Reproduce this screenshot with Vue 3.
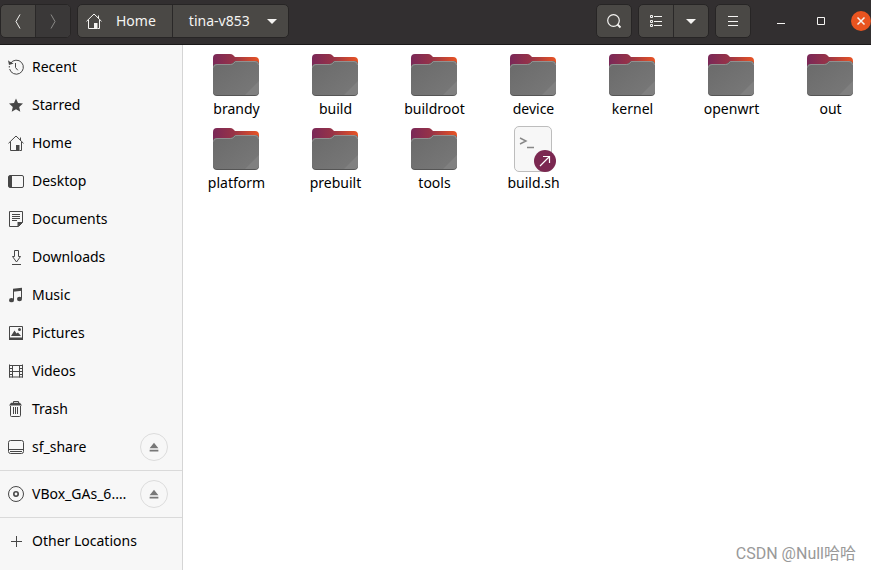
<script setup>
const places = [
  { name: 'Recent', icon: 'recent' },
  { name: 'Starred', icon: 'star' },
  { name: 'Home', icon: 'home' },
  { name: 'Desktop', icon: 'desktop' },
  { name: 'Documents', icon: 'documents' },
  { name: 'Downloads', icon: 'downloads' },
  { name: 'Music', icon: 'music' },
  { name: 'Pictures', icon: 'pictures' },
  { name: 'Videos', icon: 'videos' },
  { name: 'Trash', icon: 'trash' },
  { name: 'sf_share', icon: 'drive', eject: true },
]
const volumes = [{ name: 'VBox_GAs_6.…', icon: 'disc', eject: true }]
const other = [{ name: 'Other Locations', icon: 'plus' }]
const sections = [places, volumes, other]

const files = [
  'brandy', 'build', 'buildroot', 'device', 'kernel', 'openwrt', 'out',
  'platform', 'prebuilt', 'tools', 'build.sh',
]

const line = (d) => `<path d="${d}" fill="none" stroke="currentColor"/>`
const solid = (d) => `<path d="${d}" fill="currentColor" fill-rule="evenodd"/>`

const icons = {
  recent:
    line('M2.6 4.2A7 7 0 1 1 1.6 10M7.5 4v4.5l2.3 2.8') +
    solid('M0 1.2l1.6 1.2L5.6 4.4 1 6zM.8 7h1v1.6h-1z'),
  star: solid('M8 1.5l2 4.6 5 .5-3.8 3.3 1.1 4.9L8 12.2l-4.3 2.6 1.1-4.9L1 6.6l5-.5z'),
  home:
    line('M.5 8.3L8 1l7.5 7.3M2.5 7v8.5h6M11.5 15.5h2V7M12.5 2.5v3') +
    solid('M8 10h3.5v6H8z'),
  desktop:
    '<rect x=".5" y="2.5" width="15" height="12" rx="1.5" fill="none" stroke="currentColor"/>' +
    solid('M1 3h3v11H1z'),
  documents:
    line('M1.5 .5h13v11l-4 4h-9zM4 3.5h8M4 5.5h8M4 7.5h8M4 9.5h5') +
    solid('M9.5 16v-5H15z'),
  downloads: line('M6.5 1.5h4v6h2l-4 5.5-4-5.5h2zM4 15.5h9'),
  music:
    line('M5.5 13V2.5M13.5 11.5V1.5') +
    solid('M5 1.8L14 .8v3L5 4.8zM1 13.2a2.3 2 0 1 0 5 0 2.3 2 0 0 0-5 0zM9 12a2.3 2 0 1 0 5 0 2.3 2 0 0 0-5 0z'),
  pictures:
    line('M1.5 1.5h13v13h-13z') +
    solid('M1 12.5h14V15H1zM3 11l3.5-5.5 2 3L10 7.5l3 3.5zM10 4.5a1.5 1.5 0 1 0 3 0 1.5 1.5 0 0 0-3 0z'),
  videos:
    line('M1.5 1.5v13M14.5 1.5v13M4.5 2v12.5M11.5 2v12.5M4 2.5h8M4 8.5h8M4 14h8') +
    line('M1 2.5h3M1 5.5h3M1 8.5h3M1 11.5h3M1 14h3M12 2.5h3M12 5.5h3M12 8.5h3M12 11.5h3M12 14h3'),
  trash:
    line('M5.5 2v-1.5h5V2M2.5 5v9.5q0 1 1 1h8q1 0 1-1V5M5.5 6v7M7.5 6v7M9.5 6v7') +
    solid('M3 1.8h9l2 2.7H1z'),
  drive:
    '<rect x=".5" y="1.5" width="15" height="13" rx="2" fill="none" stroke="currentColor"/>' +
    line('M1 10.5h14M2 12.5h12'),
  disc:
    '<circle cx="8" cy="8" r="7.5" fill="none" stroke="currentColor"/>' +
    '<circle cx="8" cy="8" r="2.2" fill="none" stroke="currentColor" stroke-width="1.6"/>',
  plus: line('M8.5 3v11M3 8.5h11'),
  back: line('M10 1.5L6 8.5l4 7'),
  forward: line('M6 1.5l4 7-4 7'),
  caret: solid('M3 6h10l-5 5z'),
  search:
    '<circle cx="7.5" cy="7.5" r="5.8" fill="none" stroke="currentColor" stroke-width="1.2"/>' +
    '<path d="M11.5 11.5l3 3" stroke="currentColor" stroke-width="1.8"/>',
  list: line('M2.5 2.5h2v2h-2zM2.5 7.5h2v2h-2zM2.5 11.5h2v2h-2zM6 3.5h8M6 8.5h8M6 12.5h8'),
  menu: line('M3 3.5h10M3 8.5h10M3 12.5h10'),
  minimize: line('M4 10.5h8'),
  maximize: line('M4.5 4.5h7v7h-7z'),
  close: '<path d="M4.5 4.5l7 7M11.5 4.5l-7 7" stroke="currentColor" stroke-width="1.5"/>',
  eject: solid('M8 3l5 6.5H3zM3 11h10v2H3z'),
}
</script>

<template>
  <div class="window">
    <header class="bar">
      <div class="group">
        <button type="button" aria-label="Back"><svg class="icon" viewBox="0 0 16 16" v-html="icons.back" /></button>
        <button type="button" aria-label="Forward" class="dim" disabled><svg class="icon" viewBox="0 0 16 16" v-html="icons.forward" /></button>
      </div>
      <nav class="group path">
        <button type="button" class="crumb"><svg class="icon" viewBox="0 0 16 16" v-html="icons.home" />Home</button>
        <button type="button" class="crumb current">tina-v853<svg class="icon" viewBox="0 0 16 16" v-html="icons.caret" /></button>
      </nav>
      <div class="tools">
        <div class="group">
          <button type="button" aria-label="Search"><svg class="icon" viewBox="0 0 16 16" v-html="icons.search" /></button>
        </div>
        <div class="group">
          <button type="button" aria-label="List view"><svg class="icon" viewBox="0 0 16 16" v-html="icons.list" /></button>
          <button type="button" aria-label="View options"><svg class="icon" viewBox="0 0 16 16" v-html="icons.caret" /></button>
        </div>
        <div class="group">
          <button type="button" aria-label="Menu"><svg class="icon" viewBox="0 0 16 16" v-html="icons.menu" /></button>
        </div>
      </div>
      <div class="controls">
        <button type="button" aria-label="Minimize"><svg class="icon" viewBox="0 0 16 16" v-html="icons.minimize" /></button>
        <button type="button" aria-label="Maximize"><svg class="icon" viewBox="0 0 16 16" v-html="icons.maximize" /></button>
        <button type="button" aria-label="Close" class="close"><svg class="icon" viewBox="0 0 16 16" v-html="icons.close" /></button>
      </div>
    </header>

    <div class="body">
      <aside class="sidebar">
        <ul v-for="(section, i) in sections" :key="i" class="section">
          <li v-for="item in section" :key="item.name" class="place">
            <a href="#" class="link">
              <svg class="icon" viewBox="0 0 16 16" v-html="icons[item.icon]" />
              <span class="name">{{ item.name }}</span>
            </a>
            <button v-if="item.eject" type="button" class="eject" :aria-label="'Eject ' + item.name">
              <svg viewBox="0 0 16 16" v-html="icons.eject" />
            </button>
          </li>
        </ul>
      </aside>

      <main class="files">
        <svg class="defs" aria-hidden="true">
          <defs>
            <linearGradient id="folder-back" x1="0" y1="0" x2="1" y2="0">
              <stop offset="0" stop-color="#7a2858" />
              <stop offset=".45" stop-color="#983347" />
              <stop offset="1" stop-color="#e95424" />
            </linearGradient>
            <linearGradient id="folder-front" x1="0" y1="0" x2="1" y2="1">
              <stop offset="0" stop-color="#6a6a6a" />
              <stop offset="1" stop-color="#797979" />
            </linearGradient>
          </defs>
        </svg>
        <a v-for="file in files" :key="file" href="#" class="file">
          <svg v-if="file !== 'build.sh'" class="thumb" viewBox="0 0 47 48">
            <path d="M0 7q0-4 4-4h13q2 0 3 1l2 2h20q4 0 4 4v8H0z" fill="url(#folder-back)" />
            <path d="M0 17q0-4 4-4h13q2 0 3-1l2-2h20q4 0 4 4v27q0 4-4 4H4q-4 0-4-4z" fill="#555" />
            <path d="M0 17q0-4 4-4h13q2 0 3-1l2-2h20q4 0 4 4v26q0 4-4 4H4q-4 0-4-4z" fill="url(#folder-front)" />
            <path d="M.5 16.5q0-3 3.5-3h13.5q2 0 3-1l2-2h19.5q3.5 0 3.5 3.5" fill="none" stroke="#999" stroke-width=".8" />
            <path d="M46 30v10q0 4-4 4H32z" fill="#808080" />
          </svg>
          <svg v-else class="thumb" viewBox="0 0 47 48">
            <rect x="4.5" y="1.5" width="37" height="45" rx="4.5" fill="#f7f7f7" stroke="#bdbdbd" />
            <path d="M10 13l6 3-6 3M17 22.5h7" fill="none" stroke="#888" stroke-width="1.4" />
            <circle cx="35" cy="36" r="11" fill="#7b2851" />
            <path d="M30 41l9.5-9.5M33 31.500h6.500V38" fill="none" stroke="#fff" stroke-width="1.2" />
          </svg>
          <span>{{ file }}</span>
        </a>
        <div class="watermark">CSDN @Null哈哈</div>
      </main>
    </div>
  </div>
</template>

<style>
body {
  margin: 0;
}
</style>

<style scoped>
.window {
  display: flex;
  flex-direction: column;
  min-height: 100vh;
  font: 14px/20px "Noto Sans", "Noto Sans CJK SC", sans-serif;
  color: #000;
  background: #fff;
}
button {
  margin: 0;
  padding: 0;
  border: 0;
  background: none;
  color: inherit;
  font: inherit;
}
a {
  color: inherit;
  text-decoration: none;
}
.icon {
  width: 16px;
  height: 16px;
  flex: none;
}
.bar {
  box-sizing: border-box;
  height: 45px;
  display: flex;
  align-items: center;
  padding-bottom: 2px;
  border-bottom: 1px solid #1a1919;
  background: #322f30;
  color: #f5f4f2;
}
.group {
  display: flex;
  border: 1px solid #272525;
  border-radius: 5px;
  overflow: hidden;
  background: #4a4845;
}
.group button {
  box-sizing: content-box;
  min-width: 34px;
  height: 32px;
  display: flex;
  align-items: center;
  justify-content: center;
}
.group button + button {
  border-left: 1px solid #2a2828;
}
.group .dim {
  background: #3a3838;
  color: #8b8987;
}
.path {
  margin-left: 6px;
}
.group .crumb {
  padding: 0 16px 0 8px;
  gap: 14px;
}
.group .current {
  padding: 0 8px 0 16px;
}
.tools {
  margin-left: auto;
  display: flex;
  gap: 6px;
}
.controls {
  display: flex;
  align-items: center;
  gap: 20px;
  margin-left: 20px;
}
.controls button {
  width: 20px;
  height: 20px;
  display: flex;
  align-items: center;
  justify-content: center;
  border-radius: 50%;
}
.controls .close {
  background: #e95420;
}
.body {
  flex: 1;
  display: flex;
}
.sidebar {
  width: 182px;
  flex: none;
  background: #f7f7f7;
  border-right: 1px solid #d5d5d5;
}
.section {
  list-style: none;
  margin: 0;
  padding: 4px 0;
}
.section:first-child {
  padding-top: 3px;
}
.section + .section {
  border-top: 1px solid #dadada;
}
.place {
  height: 38px;
  display: flex;
  align-items: center;
  padding: 0 14px 0 8px;
  gap: 4px;
}
.link {
  flex: 1;
  min-width: 0;
  display: flex;
  align-items: center;
  gap: 8px;
}
.link .icon {
  color: #474747;
}
.name {
  white-space: nowrap;
}
.eject {
  box-sizing: border-box;
  width: 28px;
  height: 28px;
  flex: none;
  display: flex;
  align-items: center;
  justify-content: center;
  border: 1px solid #dcdcdc;
  border-radius: 50%;
  color: #777;
}
.eject svg {
  width: 14px;
  height: 14px;
}
.files {
  position: relative;
  flex: 1;
  min-width: 0;
  display: grid;
  grid-template-columns: repeat(auto-fill, 81px);
  align-content: start;
  gap: 6px 18px;
  padding: 6px 0 6px 13px;
}
.defs {
  position: absolute;
  width: 0;
  height: 0;
}
.file {
  display: flex;
  flex-direction: column;
  align-items: center;
}
.thumb {
  width: 47px;
  height: 48px;
}
.watermark {
  position: absolute;
  right: 15px;
  bottom: 6px;
  font: 16px/20px Roboto, "Noto Sans CJK SC", sans-serif;
  color: #999;
}
</style>
